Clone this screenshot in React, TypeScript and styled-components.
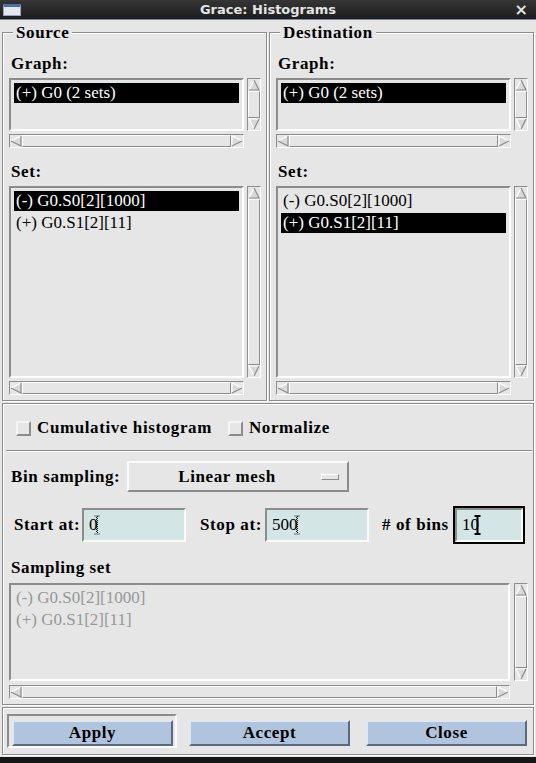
import React from 'react';
import styled, { createGlobalStyle } from 'styled-components';

const GlobalStyle = createGlobalStyle`
  html, body {
    margin: 0;
    padding: 0;
    background: #161616;
  }
  body {
    font-family: "Liberation Serif", "Times New Roman", serif;
    font-size: 17px;
    color: #000;
  }
`;

const Window = styled.div`
  width: 536px;
  height: 763px;
  display: flex;
  flex-direction: column;
  background: #161616;
`;

const TitleBar = styled.div`
  height: 19px;
  flex: none;
  display: grid;
  grid-template-columns: 28px 1fr 28px;
  align-items: center;
  background: linear-gradient(#363636, #1c1c1c);
  border-bottom: 1px solid #7b8aa3;
  color: #e4e4e4;
  font: bold 13px "DejaVu Sans", sans-serif;
`;

const WindowIcon = styled.span`
  margin-left: 3px;
  width: 16px;
  height: 8px;
  background: #e3e7ef;
  border: 1px solid #9aa4b6;
  border-top: 3px solid #4d6fa8;
`;

const Title = styled.span`
  text-align: center;
`;

const CloseGlyph = styled.span`
  justify-self: end;
  margin-right: 8px;
  font-size: 16px;
  line-height: 19px;
`;

const Body = styled.div`
  height: 737px;
  box-sizing: border-box;
  background: #e6e6e6;
  padding: 12px 2px 1px;
  display: flex;
  flex-direction: column;
  gap: 2px;
`;

const Panes = styled.div`
  display: grid;
  grid-template-columns: 1fr 1fr;
  gap: 2px;
`;

const Frame = styled.div<{ $pad: string; $row?: boolean }>`
  position: relative;
  border: 1px solid #8c8c8c;
  box-shadow: 1px 1px 0 #fff, inset 1px 1px 0 #fff;
  padding: ${p => p.$pad};
  display: flex;
  flex-direction: ${p => (p.$row ? 'row' : 'column')};
  align-items: ${p => (p.$row ? 'flex-start' : 'stretch')};
`;

const FrameTitle = styled.span`
  position: absolute;
  top: -9px;
  left: 10px;
  padding: 0 3px;
  background: #e6e6e6;
  font-weight: bold;
  letter-spacing: 0.6px;
  line-height: 18px;
`;

const Label = styled.div<{ $top?: number; $left?: number }>`
  font-weight: bold;
  letter-spacing: 0.6px;
  line-height: 19px;
  margin: ${p => p.$top ?? 0}px 0 5px ${p => p.$left ?? 2}px;
`;

const ScrollArea = styled.div<{ $h: number; $gap: number; $m?: string }>`
  display: grid;
  grid-template-columns: 1fr 14px;
  grid-template-rows: ${p => p.$h}px 14px;
  gap: ${p => p.$gap}px;
  margin: ${p => p.$m ?? '0'};
`;

const ListView = styled.div`
  box-sizing: border-box;
  border: 2px solid;
  border-color: #8c8c8c #fff #fff #8c8c8c;
  padding: 3px;
  overflow: hidden;
  display: flex;
  flex-direction: column;
  gap: 2px;
`;

const ListItem = styled.div<{ $selected?: boolean; $disabled?: boolean }>`
  height: 20px;
  line-height: 20px;
  padding-left: 2px;
  white-space: nowrap;
  background: ${p => (p.$selected ? '#000' : 'transparent')};
  color: ${p => (p.$selected ? '#fff' : p.$disabled ? '#979797' : '#000')};
`;

const Track = styled.div<{ $horizontal?: boolean }>`
  box-sizing: border-box;
  border: 1px solid;
  border-color: #8c8c8c #fff #fff #8c8c8c;
  display: flex;
  flex-direction: ${p => (p.$horizontal ? 'row' : 'column')};
`;

const Thumb = styled.div`
  flex: 1;
  box-sizing: border-box;
  border: 1px solid;
  border-color: #fff #8c8c8c #8c8c8c #fff;
`;

const ArrowSvg = styled.svg`
  display: block;
  flex: none;
`;

type Dir = 'up' | 'down' | 'left' | 'right';

const Arrow: React.FC<{ dir: Dir }> = ({ dir }) => {
  const shapes: Record<Dir, { fill: string; light: string; dark: string }> = {
    up: { fill: '6,1 11,11 1,11', light: '1,11 6,1', dark: '6,1 11,11 1,11' },
    down: { fill: '1,1 11,1 6,11', light: '6,11 1,1 11,1', dark: '11,1 6,11' },
    left: { fill: '1,6 11,1 11,11', light: '1,6 11,1', dark: '11,1 11,11 1,6' },
    right: { fill: '1,1 11,6 1,11', light: '1,11 1,1 11,6', dark: '11,6 1,11' },
  };
  const s = shapes[dir];
  return (
    <ArrowSvg width="12" height="12" viewBox="0 0 12 12">
      <polygon points={s.fill} fill="#d9d9d9" />
      <polyline points={s.light} fill="none" stroke="#ffffff" strokeWidth="1.2" />
      <polyline points={s.dark} fill="none" stroke="#8c8c8c" strokeWidth="1.2" />
    </ArrowSvg>
  );
};

type Item = { text: string; selected?: boolean };

const ScrolledList: React.FC<{
  items: Item[];
  height: number;
  gap: number;
  margin?: string;
  disabled?: boolean;
}> = ({ items, height, gap, margin, disabled }) => (
  <ScrollArea $h={height} $gap={gap} $m={margin}>
    <ListView>
      {items.map(it => (
        <ListItem key={it.text} $selected={it.selected} $disabled={disabled}>
          {it.text}
        </ListItem>
      ))}
    </ListView>
    <Track>
      <Arrow dir="up" />
      <Thumb />
      <Arrow dir="down" />
    </Track>
    <Track $horizontal>
      <Arrow dir="left" />
      <Thumb />
      <Arrow dir="right" />
    </Track>
  </ScrollArea>
);

const CheckRow = styled.div`
  display: flex;
  align-items: center;
  height: 24px;
  padding-left: 13px;
  font-weight: bold;
  letter-spacing: 0.6px;
  white-space: nowrap;
`;

const CheckBox = styled.span<{ $ml?: number }>`
  width: 15px;
  height: 15px;
  flex: none;
  box-sizing: border-box;
  border: 2px solid;
  border-color: #f4f4f4 #8c8c8c #8c8c8c #f4f4f4;
  margin: 0 6px 0 ${p => p.$ml ?? 0}px;
`;

const Separator = styled.div`
  border-top: 1px solid #8c8c8c;
  border-bottom: 1px solid #fff;
  margin: 10px 1px 0 3px;
`;

const SamplingRow = styled.div`
  display: flex;
  align-items: center;
  margin-top: 9px;
  padding-left: 8px;
`;

const RowLabel = styled.span<{ $w: number; $ml?: number }>`
  width: ${p => p.$w}px;
  margin-left: ${p => p.$ml ?? 0}px;
  flex: none;
  font-weight: bold;
  letter-spacing: 0.6px;
  white-space: nowrap;
`;

const OptionButton = styled.div`
  width: 222px;
  height: 31px;
  box-sizing: border-box;
  border: 2px solid;
  border-color: #fbfbfb #8c8c8c #8c8c8c #fbfbfb;
  display: flex;
  align-items: center;
`;

const OptionText = styled.span`
  flex: 1;
  text-align: center;
  font-weight: bold;
  letter-spacing: 0.6px;
  padding-left: 4px;
`;

const Indicator = styled.span`
  width: 18px;
  height: 6px;
  box-sizing: border-box;
  border: 1px solid;
  border-color: #fff #8c8c8c #8c8c8c #fff;
  margin-right: 8px;
`;

const FieldRow = styled.div`
  display: flex;
  align-items: center;
  margin-top: 14px;
  padding-left: 11px;
`;

const FieldWrap = styled.div<{ $w: number; $focused?: boolean }>`
  width: ${p => p.$w}px;
  flex: none;
  box-sizing: border-box;
  border: 2px solid ${p => (p.$focused ? '#000' : 'transparent')};
`;

const Field = styled.div`
  height: 34px;
  box-sizing: border-box;
  border: 2px solid;
  border-color: #8c8c8c #fbfbfb #fbfbfb #8c8c8c;
  background: #d3e5e5;
  padding-left: 5px;
  display: flex;
  align-items: center;
  white-space: nowrap;
`;

const CaretSvg = styled.svg<{ $shift: number }>`
  display: block;
  margin-left: ${p => p.$shift}px;
`;

const Caret: React.FC<{ solid?: boolean; shift: number }> = ({ solid, shift }) => (
  <CaretSvg $shift={shift} width="7" height="20" viewBox="0 0 7 20">
    <g stroke="#000" strokeWidth={solid ? 2 : 1} strokeDasharray={solid ? undefined : '1 1'} fill="none">
      <line x1="3.5" y1="1" x2="3.5" y2="19" />
      <line x1="0.5" y1="1" x2="6.5" y2="1" />
      <line x1="0.5" y1="19" x2="6.5" y2="19" />
      {!solid && <line x1="2.5" y1="2" x2="2.5" y2="18" />}
    </g>
  </CaretSvg>
);

const DefaultRing = styled.div`
  border: 2px solid;
  border-color: #8c8c8c #fbfbfb #fbfbfb #8c8c8c;
  padding: 4px 2px 0 3px;
`;

const PushButton = styled.div<{ $top?: number; $ml?: number }>`
  width: 161px;
  height: 26px;
  flex: none;
  box-sizing: border-box;
  margin: ${p => p.$top ?? 0}px 0 0 ${p => p.$ml ?? 0}px;
  background: #b0c4de;
  border: 2px solid;
  border-color: #dfe7f1 #5b6a80 #5b6a80 #dfe7f1;
  display: flex;
  align-items: center;
  justify-content: center;
  font-weight: bold;
  letter-spacing: 0.6px;
`;

const sets: Item[] = [
  { text: '(-) G0.S0[2][1000]' },
  { text: '(+) G0.S1[2][11]' },
];

export default function App() {
  return (
    <>
      <GlobalStyle />
      <Window>
        <TitleBar>
          <WindowIcon />
          <Title>Grace: Histograms</Title>
          <CloseGlyph>×</CloseGlyph>
        </TitleBar>
        <Body>
          <Panes>
            <Frame $pad="21px 5px 5px 6px">
              <FrameTitle>Source</FrameTitle>
              <Label>Graph:</Label>
              <ScrolledList height={53} gap={3} items={[{ text: '(+) G0 (2 sets)', selected: true }]} />
              <Label $top={14}>Set:</Label>
              <ScrolledList
                height={192}
                gap={3}
                items={[{ ...sets[0], selected: true }, sets[1]]}
              />
            </Frame>
            <Frame $pad="21px 5px 5px 6px">
              <FrameTitle>Destination</FrameTitle>
              <Label>Graph:</Label>
              <ScrolledList height={53} gap={3} items={[{ text: '(+) G0 (2 sets)', selected: true }]} />
              <Label $top={14}>Set:</Label>
              <ScrolledList
                height={192}
                gap={3}
                items={[sets[0], { ...sets[1], selected: true }]}
              />
            </Frame>
          </Panes>

          <Frame $pad="12px 0 5px 0">
            <CheckRow>
              <CheckBox />
              Cumulative histogram
              <CheckBox $ml={16} />
              Normalize
            </CheckRow>
            <Separator />
            <SamplingRow>
              <RowLabel $w={116}>Bin sampling:</RowLabel>
              <OptionButton>
                <OptionText>Linear mesh</OptionText>
                <Indicator />
              </OptionButton>
            </SamplingRow>
            <FieldRow>
              <RowLabel $w={66}>Start at:</RowLabel>
              <FieldWrap $w={108}>
                <Field>
                  0<Caret shift={-4} />
                </Field>
              </FieldWrap>
              <RowLabel $w={63} $ml={12}>Stop at:</RowLabel>
              <FieldWrap $w={108}>
                <Field>
                  500<Caret shift={-4} />
                </Field>
              </FieldWrap>
              <RowLabel $w={71} $ml={11}># of bins</RowLabel>
              <FieldWrap $w={72} $focused>
                <Field>
                  10<Caret solid shift={-5} />
                </Field>
              </FieldWrap>
            </FieldRow>
            <Label $top={14} $left={8}>
              Sampling set
            </Label>
            <ScrolledList height={98} gap={4} margin="1px 5px 0 6px" items={sets} disabled />
          </Frame>

          <Frame $pad="6px 6px 6px 4px" $row>
            <DefaultRing>
              <PushButton>Apply</PushButton>
            </DefaultRing>
            <PushButton $top={6} $ml={12}>
              Accept
            </PushButton>
            <PushButton $top={6} $ml={16}>
              Close
            </PushButton>
          </Frame>
        </Body>
      </Window>
    </>
  );
}
